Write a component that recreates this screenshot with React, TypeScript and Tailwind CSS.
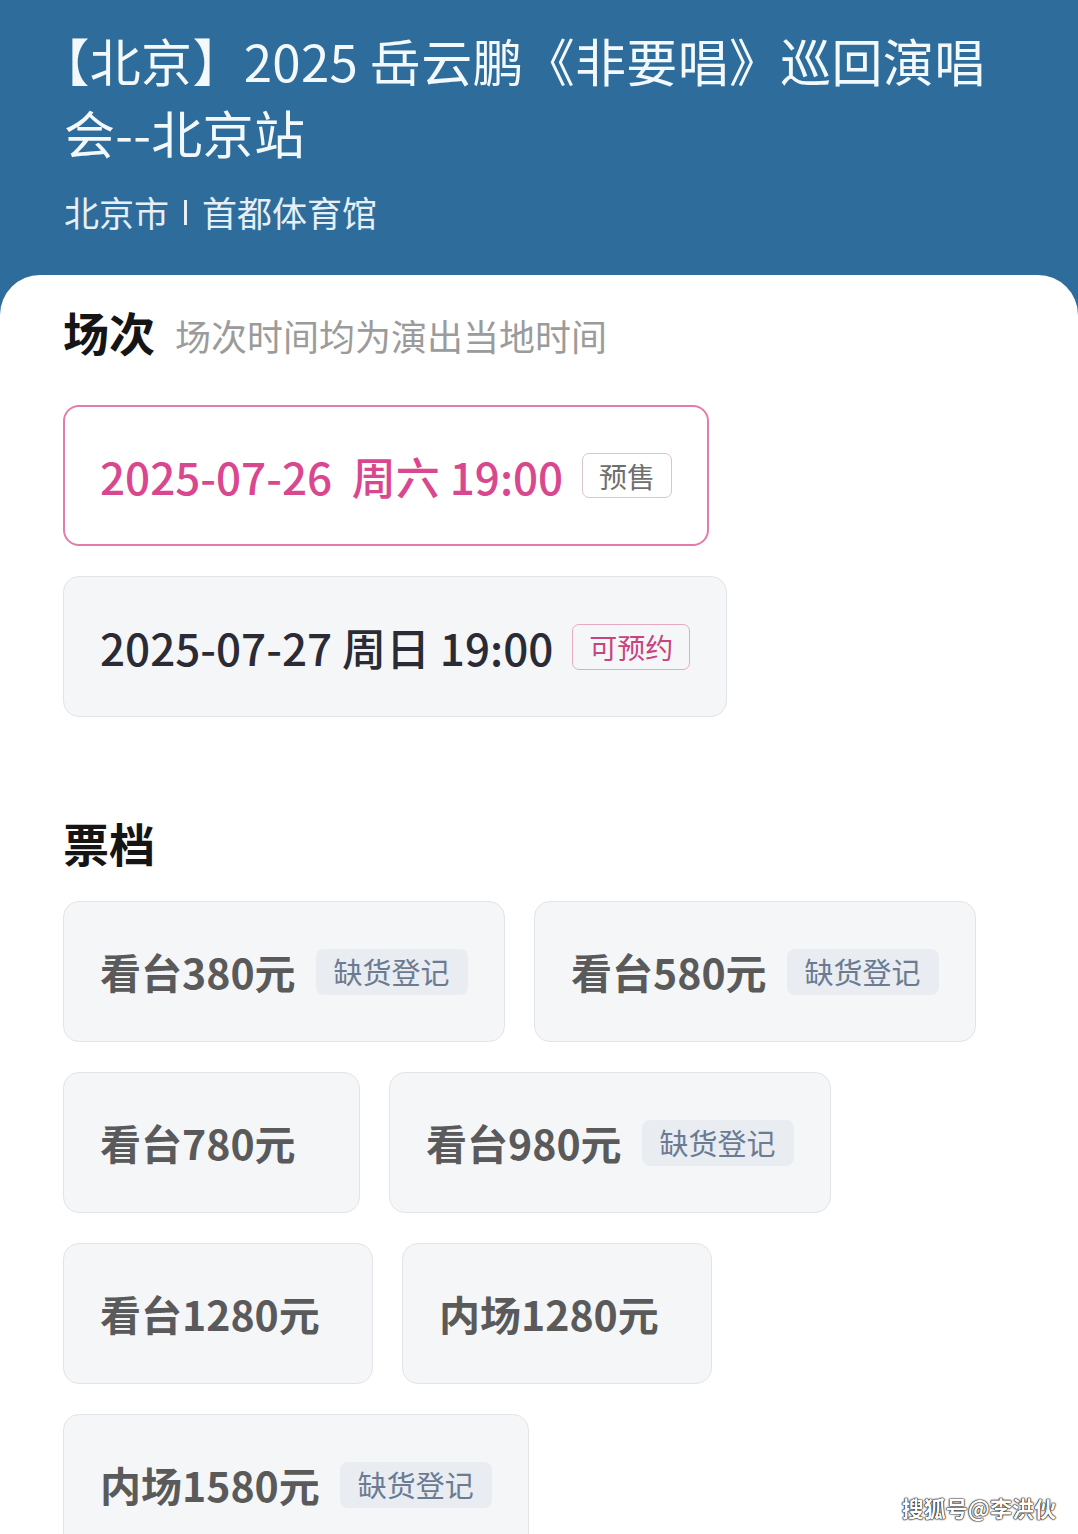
const tickets = [
  [
    { name: '看台380元', w: 'w-[442px]', soldOut: true },
    { name: '看台580元', w: 'w-[442px]', soldOut: true },
  ],
  [
    { name: '看台780元', w: 'w-[297px]', soldOut: false },
    { name: '看台980元', w: 'w-[442px]', soldOut: true },
  ],
  [
    { name: '看台1280元', w: 'w-[310px]', soldOut: false },
    { name: '内场1280元', w: 'w-[310px]', soldOut: false },
  ],
  [{ name: '内场1580元', w: 'w-[466px]', soldOut: true }],
];

export default function App() {
  return (
    <div className="relative h-[1534px] w-[1078px] overflow-hidden bg-[#2e6d9b] font-['Noto_Sans_CJK_SC',sans-serif]">
      {/* Header */}
      <div className="px-16 pt-[24px] pb-[38px] text-[#f3f8fb]">
        <h1 className="text-[51px] leading-[72px] font-normal tracking-[0.3px]">
          <span className="[font-feature-settings:'halt']">【</span>北京】2025 岳云鹏《非要唱》巡回演唱
          <br />
          会--北京站
        </h1>
        <p className="mt-[19px] flex items-center text-[35px] leading-[50px] text-[#e6eff6]">
          北京市
          <span className="mx-[15px] inline-block h-[25px] w-[3px] bg-[#e6eff6]" />
          首都体育馆
        </p>
      </div>

      {/* Body */}
      <div className="h-full rounded-t-[40px] bg-white px-[63px] pt-[26px]">
        <div className="flex items-baseline gap-[20px]">
          <h2 className="text-[46px] leading-[60px] font-bold text-[#151515]">场次</h2>
          <span className="text-[36px] text-[#9b9b9b]">场次时间均为演出当地时间</span>
        </div>

        <div className="mt-[43px] flex flex-col gap-[30px]">
          <div className="flex h-[141px] w-[646px] items-center gap-[19px] rounded-[16px] border-2 border-[#e47cab] bg-white px-[35px]">
            <span className="whitespace-pre text-[44px] font-medium text-[#d9488f]">2025-07-26  周六 19:00</span>
            <span className="flex h-[45px] w-[94px] items-center justify-center rounded-[7px] border-[1.5px] border-[#dcc3cd] text-[28px] text-[#6e6e6e]">
              预售
            </span>
          </div>
          <div className="flex h-[141px] w-[664px] items-center gap-[19px] rounded-[16px] border-[1.5px] border-[#e3e4e7] bg-[#f5f6f8] px-[36px]">
            <span className="whitespace-pre text-[44px] font-medium text-[#2a2b35]">2025-07-27 周日 19:00</span>
            <span className="flex h-[46px] w-[124px] items-center justify-center rounded-[7px] border-[1.5px] border-[#e8aac2] text-[28px] text-[#c7447d]">
              可预约
            </span>
          </div>
        </div>

        <h2 className="mt-[95px] text-[46px] leading-[60px] font-bold text-[#151515]">票档</h2>

        <div className="mt-[29px] flex flex-col gap-[30px]">
          {tickets.map((row, i) => (
            <div key={i} className="flex gap-[29px]">
              {row.map((t) => (
                <div
                  key={t.name}
                  className={`flex h-[141px] shrink-0 items-center gap-[20px] rounded-[16px] border-[1.5px] border-[#e3e4e7] bg-[#f5f6f8] pl-[36px] ${t.w}`}
                >
                  <span className="shrink-0 whitespace-nowrap text-[41px] font-bold text-[#5a5a5a]">{t.name}</span>
                  {t.soldOut && (
                    <span className="flex h-[46px] shrink-0 items-center whitespace-nowrap rounded-[8px] bg-[#e9ecf1] px-[18px] text-[29px] text-[#6b7b92]">
                      缺货登记
                    </span>
                  )}
                </div>
              ))}
            </div>
          ))}
        </div>
      </div>

      {/* Watermark */}
      <div className="absolute right-[22px] bottom-[10px] text-[22px] font-bold text-white [text-shadow:0_0_2px_#000,0_0_1px_#000,0_0_1px_#000]">
        搜狐号@李洪伙
      </div>
    </div>
  );
}
